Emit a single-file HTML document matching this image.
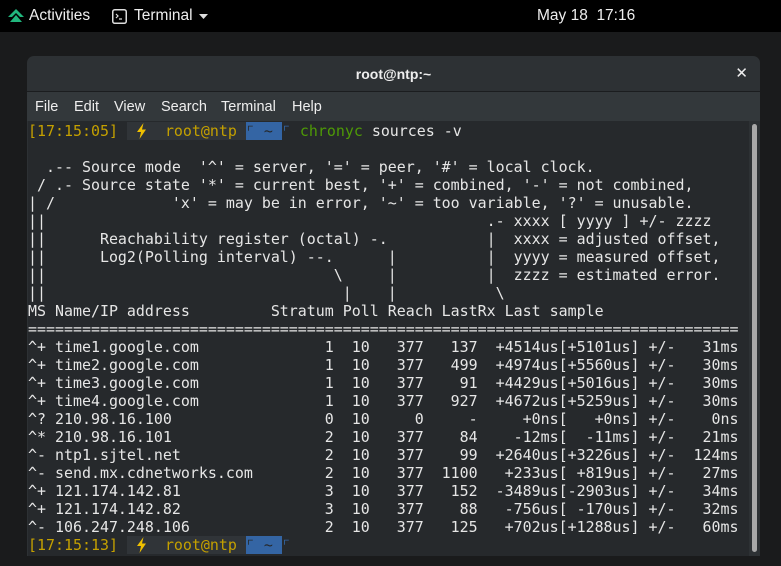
<!DOCTYPE html>
<html><head><meta charset="utf-8"><style>
*{margin:0;padding:0;box-sizing:border-box}
body{width:781px;height:566px;background:#1a1b1c;position:relative;overflow:hidden;font-family:"Liberation Sans","DejaVu Sans",sans-serif}
#top{position:absolute;left:0;top:0;width:781px;height:32px;background:#000;color:#eee;font-size:15.5px}
#top span{position:absolute;top:7px}
#win{position:absolute;left:27px;top:56px;width:733px;height:500px;background:#2d3134;border-radius:7px 7px 0 0;overflow:hidden}
#title{height:36px;border-bottom:1px solid #1b1d1f;color:#eee;font-size:14px;font-weight:bold;text-align:center;line-height:36px;position:relative}
#menu{height:29px;background:#33383b;color:#eee;font-size:14.5px;line-height:31px;position:relative}
#menu span{position:absolute;top:0}
#term{position:absolute;left:1px;top:65px;width:721px;height:435px;background:#26292c;color:#e6e6e6;font-family:"DejaVu Sans Mono","Liberation Mono",monospace;font-size:14.95px;line-height:18px;white-space:pre;padding-top:1px}
#sb{position:absolute;left:725px;top:68px;width:5px;height:428px;background:#a8a8a8;border-radius:3px}
.y{color:#c4a000}.g{color:#4e9a06}.d{background:#303438}.b{background:#3465a4;color:#26292c}.c{color:#3465a4}
.z{display:inline-block;width:11px;height:16px;vertical-align:-3px}
</style></head><body>
<div id="top">
<svg style="position:absolute;left:8px;top:9px" width="16" height="15" viewBox="0 0 16 15"><path d="M8 0L16 8L12 8L8 4L4 8L0 8Z" fill="#21b67d"/><path d="M8 6L14 13H2Z" fill="#21b67d"/></svg>
<span style="left:29px">Activities</span>
<svg style="position:absolute;left:112px;top:9px" width="15" height="15" viewBox="0 0 15 15"><rect x="0.75" y="0.75" width="13.5" height="13.5" rx="2" fill="none" stroke="#ddd" stroke-width="1.5"/><path d="M4 5l2 2-2 2M7 10h3" stroke="#ddd" fill="none" stroke-width="1.2"/></svg>
<span style="left:134px">Terminal</span>
<svg style="position:absolute;left:199px;top:14px" width="9" height="5"><path d="M0 0h9L4.5 5z" fill="#ddd"/></svg>
<span style="left:537px">May 18&nbsp; 17:16</span>
</div>
<div id="win">
<div id="title">root@ntp:~<span style="position:absolute;right:12px;top:0;font-size:15px">✕</span></div>
<div id="menu"><span style="left:8px">File</span><span style="left:47px">Edit</span><span style="left:87px">View</span><span style="left:134px">Search</span><span style="left:194px">Terminal</span><span style="left:265px">Help</span></div>
<div id="term"><span class="y">[17:15:05] </span><span class="d"> <svg class="z" viewBox="0 0 11 16"><path d="M7.5 0L1 9H5L3.5 16L10 6.5H6Z" fill="#f0c000"/></svg>  <span class="y">root@ntp</span> </span><span class="b">⌜ ~ </span><span class="c">⌜</span> <span class="g">chronyc</span> sources -v

  .-- Source mode  '^' = server, '=' = peer, '#' = local clock.
 / .- Source state '*' = current best, '+' = combined, '-' = not combined,
| /             'x' = may be in error, '~' = too variable, '?' = unusable.
||                                                 .- xxxx [ yyyy ] +/- zzzz
||      Reachability register (octal) -.           |  xxxx = adjusted offset,
||      Log2(Polling interval) --.      |          |  yyyy = measured offset,
||                                \     |          |  zzzz = estimated error.
||                                 |    |           \
MS Name/IP address         Stratum Poll Reach LastRx Last sample
===============================================================================
^+ time1.google.com              1  10   377   137  +4514us[+5101us] +/-   31ms
^+ time2.google.com              1  10   377   499  +4974us[+5560us] +/-   30ms
^+ time3.google.com              1  10   377    91  +4429us[+5016us] +/-   30ms
^+ time4.google.com              1  10   377   927  +4672us[+5259us] +/-   30ms
^? 210.98.16.100                 0  10     0     -     +0ns[   +0ns] +/-    0ns
^* 210.98.16.101                 2  10   377    84    -12ms[  -11ms] +/-   21ms
^- ntp1.sjtel.net                2  10   377    99  +2640us[+3226us] +/-  124ms
^- send.mx.cdnetworks.com        2  10   377  1100   +233us[ +819us] +/-   27ms
^+ 121.174.142.81                3  10   377   152  -3489us[-2903us] +/-   34ms
^+ 121.174.142.82                3  10   377    88   -756us[ -170us] +/-   32ms
^- 106.247.248.106               2  10   377   125   +702us[+1288us] +/-   60ms
<span class="y">[17:15:13] </span><span class="d"> <svg class="z" viewBox="0 0 11 16"><path d="M7.5 0L1 9H5L3.5 16L10 6.5H6Z" fill="#f0c000"/></svg>  <span class="y">root@ntp</span> </span><span class="b">⌜ ~ </span><span class="c">⌜</span></div>
<div id="sb"></div>
</div>
</body></html>
